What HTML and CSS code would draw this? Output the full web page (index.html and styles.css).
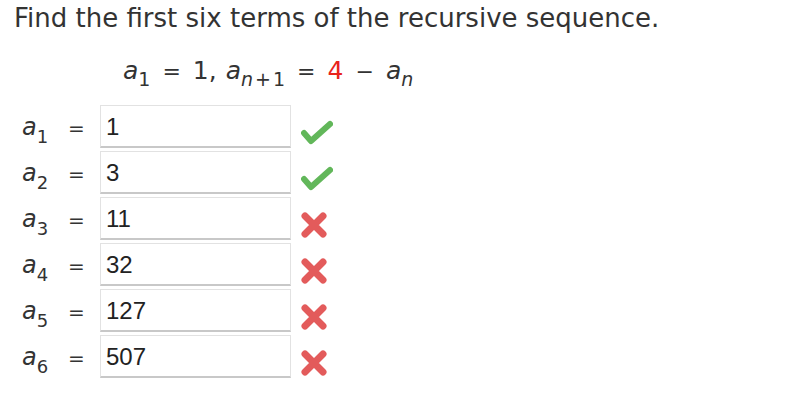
FILE: index.html
```html
<!DOCTYPE html>
<html>
<head>
<meta charset="utf-8">
<link rel="stylesheet" href="styles.css">
</head>
<body>
<div class="page">
  <p class="title">Find the first six terms of the recursive sequence.</p>
  <div class="formula">
    <span class="v">a</span><sub>1</sub><span class="op">=</span><span>1,</span><span class="v sp">a</span><sub><span class="v">n</span><span class="plus">+</span>1</sub><span class="op">=</span><span class="red">4</span><span class="op">−</span><span class="v">a</span><sub class="v">n</sub>
  </div>
  <div class="rows">
    <div class="row"><div class="lbl"><span class="v">a</span><sub>1</sub></div><div class="eq">=</div><div class="box">1</div><svg class="ok" viewBox="0 0 32 25"><path d="M3 13 L10 21 L29 4" /></svg></div>
    <div class="row"><div class="lbl"><span class="v">a</span><sub>2</sub></div><div class="eq">=</div><div class="box">3</div><svg class="ok" viewBox="0 0 32 25"><path d="M3 13 L10 21 L29 4" /></svg></div>
    <div class="row"><div class="lbl"><span class="v">a</span><sub>3</sub></div><div class="eq">=</div><div class="box">11</div><svg class="bad" viewBox="0 0 26 26"><path d="M4 4 L22 22 M22 4 L4 22" /></svg></div>
    <div class="row"><div class="lbl"><span class="v">a</span><sub>4</sub></div><div class="eq">=</div><div class="box">32</div><svg class="bad" viewBox="0 0 26 26"><path d="M4 4 L22 22 M22 4 L4 22" /></svg></div>
    <div class="row"><div class="lbl"><span class="v">a</span><sub>5</sub></div><div class="eq">=</div><div class="box">127</div><svg class="bad" viewBox="0 0 26 26"><path d="M4 4 L22 22 M22 4 L4 22" /></svg></div>
    <div class="row"><div class="lbl"><span class="v">a</span><sub>6</sub></div><div class="eq">=</div><div class="box">507</div><svg class="bad" viewBox="0 0 26 26"><path d="M4 4 L22 22 M22 4 L4 22" /></svg></div>
  </div>
</div>
</body>
</html>
```
FILE: styles.css
```css
html, body {
  margin: 0;
  padding: 0;
  background: #fff;
}
.page {
  padding: 3px 0 0 14px;
  font-family: "DejaVu Sans", Verdana, sans-serif;
  color: #333;
}
.title {
  margin: 0;
  font-size: 26px;
  line-height: 30px;
}
.formula {
  margin-top: 23px;
  padding-left: 109px;
  font-size: 25px;
  line-height: 30px;
  height: 49px;
}
.v {
  font-style: italic;
}
sub {
  font-size: 19px;
  vertical-align: -7px;
  line-height: 0;
}
.plus {
  margin: 0 2px;
}
.op {
  display: inline-block;
  margin: 0 12px;
  font-size: 22px;
}
.sp {
  margin-left: 9px;
}
.red {
  color: #e8231b;
}
.rows {
  display: flex;
  flex-direction: column;
  gap: 3px;
}
.row {
  display: flex;
  align-items: baseline;
  height: 43px;
}
.lbl {
  box-sizing: border-box;
  width: 54px;
  padding-left: 8px;
  font-size: 24px;
}
.lbl sub {
  font-size: 18px;
  vertical-align: -8px;
}
.eq {
  width: 32px;
  font-size: 20px;
}
.box {
  box-sizing: border-box;
  width: 191px;
  height: 43px;
  border: 1px solid #e2e2e2;
  border-bottom: 2px solid #c8c8c8;
  padding: 7px 0 0 5px;
  font-family: "Liberation Sans", Arial, sans-serif;
  font-size: 24px;
  color: #222;
}
.ok, .bad {
  align-self: flex-start;
  margin-left: 10px;
}
.ok {
  width: 32px;
  height: 25px;
  margin-top: 15px;
}
.ok path {
  fill: none;
  stroke: #62b75a;
  stroke-width: 6;
  stroke-linecap: round;
  stroke-linejoin: round;
}
.bad {
  width: 26px;
  height: 26px;
  margin-top: 15px;
}
.bad path {
  fill: none;
  stroke: #e35b5b;
  stroke-width: 7;
  stroke-linecap: round;
}
```
